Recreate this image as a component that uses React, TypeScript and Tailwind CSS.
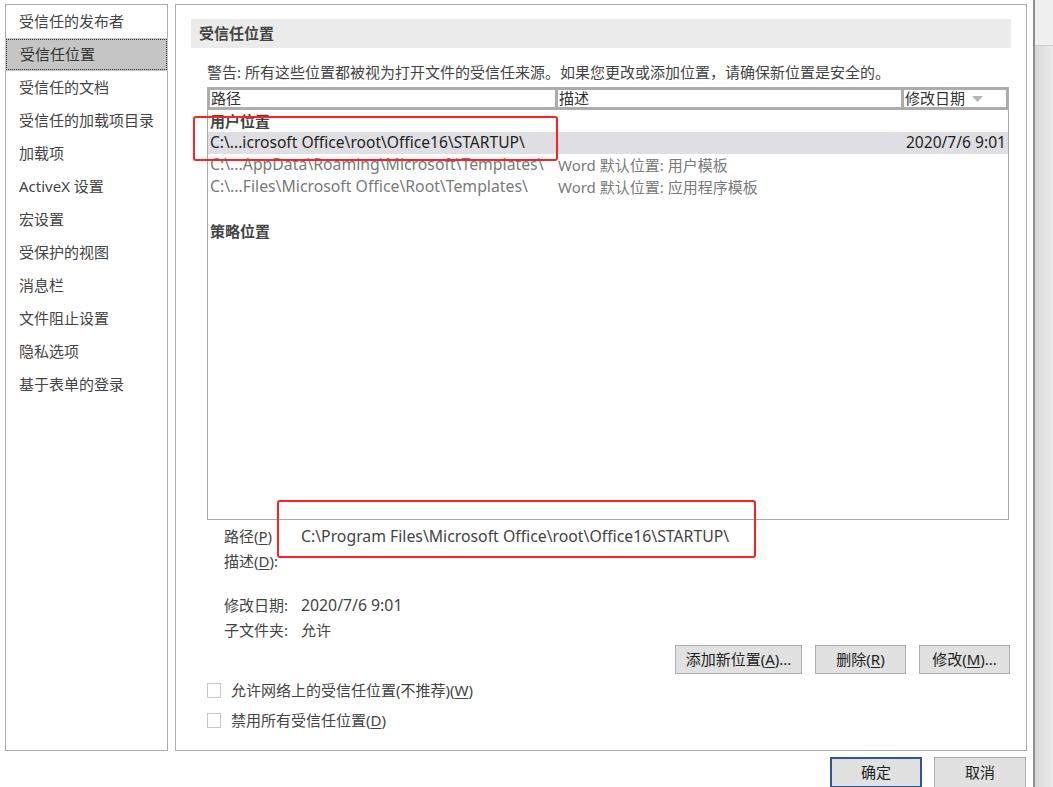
import React from "react";

const FONT = { fontFamily: '"Segoe UI", "Noto Sans", "Noto Sans CJK SC", sans-serif' };

const navItems = [
  "受信任的发布者",
  "受信任位置",
  "受信任的文档",
  "受信任的加载项目录",
  "加载项",
  "ActiveX 设置",
  "宏设置",
  "受保护的视图",
  "消息栏",
  "文件阻止设置",
  "隐私选项",
  "基于表单的登录",
];

function U({ children }: { children: React.ReactNode }) {
  return <span className="underline underline-offset-2">{children}</span>;
}

function Btn({ children, w }: { children: React.ReactNode; w: string }) {
  return (
    <div
      className={`${w} h-[29px] bg-[#e1e1e1] border border-[#adadad] flex items-center justify-center text-[15px] text-[#222]`}
    >
      {children}
    </div>
  );
}

export default function App() {
  return (
    <div className="relative w-[1053px] h-[787px] bg-white overflow-hidden flex" style={FONT}>
      {/* main column */}
      <div className="w-[1033px] h-full flex flex-col">
        <div className="flex pt-[4px] pl-[5px]">
          {/* left nav */}
          <div className="w-[163px] h-[747px] border border-[#ababab] flex flex-col">
            {navItems.map((t, i) =>
              i === 1 ? (
                <div key={t} className="h-[33px] bg-[#c5c5c5] p-[1px] -mx-px">
                  <div className="h-full border border-dotted border-[#333] flex items-center pl-[13px] text-[15px] text-[#333]">
                    {t}
                  </div>
                </div>
              ) : (
                <div key={t} className="h-[33px] flex items-center pl-[13px] text-[15px] text-[#444]">
                  {t}
                </div>
              )
            )}
          </div>

          {/* right panel */}
          <div className="ml-[7px] w-[852px] h-[747px] border border-[#ababab] flex flex-col">
            <div className="mt-[14px] mx-[15px] h-[29px] bg-[#ebebeb] flex items-center pl-[8px] text-[15px] font-bold text-[#444]">
              受信任位置
            </div>
            <div className="mt-[14px] ml-[31px] h-[20px] flex items-center text-[15px] text-[#444] whitespace-nowrap">
              警告: 所有这些位置都被视为打开文件的受信任来源。如果您更改或添加位置，请确保新位置是安全的。
            </div>

            {/* table */}
            <div className="mt-[5px] ml-[31px] w-[802px] flex flex-col">
              <div className="h-[23px] bg-[#acacac] p-[3px] flex gap-[3px]">
                <div className="w-[345px] bg-white flex items-center pl-[1px] text-[15px] text-[#333]">路径</div>
                <div className="w-[343px] bg-white flex items-center pl-[1px] text-[15px] text-[#333]">描述</div>
                <div className="w-[102px] bg-white flex items-center pl-[1px] text-[15px] text-[#333]">
                  修改日期
                  <svg width="11" height="6" viewBox="0 0 11 6" className="ml-[7px]">
                    <path d="M0 0 L11 0 L5.5 6 Z" fill="#b5b5b5" />
                  </svg>
                </div>
              </div>
              <div className="h-[410px] border-l border-r border-b border-[#a8a8a8] flex flex-col">
                <div className="h-[22px] flex items-center pl-[2px] text-[15px] font-bold text-[#444]">用户位置</div>
                <div className="h-[22px] bg-[#dfdfe3] flex items-center text-[15.6px] text-[#1e1e1e]">
                  <div className="w-[348px] pl-[2px] whitespace-nowrap">C:\...icrosoft Office\root\Office16\STARTUP\</div>
                  <div className="flex-1" />
                  <div className="pr-[2px]">2020/7/6 9:01</div>
                </div>
                <div className="h-[22px] flex items-center text-[#7a7a7a]">
                  <div className="w-[350px] pl-[2px] whitespace-nowrap text-[15.8px]">C:\...AppData\Roaming\Microsoft\Templates\</div>
                  <div className="whitespace-nowrap text-[15px]">Word 默认位置: 用户模板</div>
                </div>
                <div className="h-[22px] flex items-center text-[#7a7a7a]">
                  <div className="w-[350px] pl-[2px] whitespace-nowrap text-[15.8px]">C:\...Files\Microsoft Office\Root\Templates\</div>
                  <div className="whitespace-nowrap text-[15px]">Word 默认位置: 应用程序模板</div>
                </div>
                <div className="h-[22px]" />
                <div className="h-[22px] flex items-center pl-[2px] text-[15px] font-bold text-[#444]">策略位置</div>
              </div>
            </div>

            {/* details */}
            <div className="mt-[4px] ml-[48px] flex flex-col text-[15px] text-[#444]">
              <div className="h-[25px] flex items-center">
                <div className="w-[77px]">
                  路径(<U>P</U>)
                </div>
                <div className="whitespace-nowrap text-[15.8px]">C:\Program Files\Microsoft Office\root\Office16\STARTUP\</div>
              </div>
              <div className="h-[25px] flex items-center">
                <div className="w-[77px]">
                  描述(<U>D</U>):
                </div>
              </div>
              <div className="mt-[19px] h-[25px] flex items-center">
                <div className="w-[77px]">修改日期:</div>
                <div className="text-[15.8px]">2020/7/6 9:01</div>
              </div>
              <div className="h-[25px] flex items-center">
                <div className="w-[77px]">子文件夹:</div>
                <div>允许</div>
              </div>
            </div>

            <div className="mt-[2px] mr-[16px] flex justify-end gap-[13px]">
              <Btn w="w-[127px]">
                添加新位置(<U>A</U>)...
              </Btn>
              <Btn w="w-[91px]">
                删除(<U>R</U>)
              </Btn>
              <Btn w="w-[91px]">
                修改(<U>M</U>)...
              </Btn>
            </div>

            <div className="mt-[6px] ml-[31px] h-[21px] flex items-center text-[15px] text-[#444]">
              <div className="w-[14px] h-[15px] border border-[#c8c8c8] bg-white mr-[10px]" />
              <span>
                允许网络上的受信任位置(不推荐)(<U>W</U>)
              </span>
            </div>
            <div className="mt-[9px] ml-[31px] h-[21px] flex items-center text-[15px] text-[#444]">
              <div className="w-[14px] h-[15px] border border-[#c8c8c8] bg-white mr-[10px]" />
              <span>
                禁用所有受信任位置(<U>D</U>)
              </span>
            </div>
          </div>
        </div>

        {/* bottom buttons */}
        <div className="mt-[6px] pr-[7px] flex justify-end gap-[12px]">
          <div className="w-[92px] h-[31px] bg-[#e1e1e1] border-2 border-[#2b579a] flex items-center justify-center text-[15px] text-[#222]">
            确定
          </div>
          <div className="w-[92px] h-[31px] bg-[#e1e1e1] border border-[#adadad] flex items-center justify-center text-[15px] text-[#222]">
            取消
          </div>
        </div>
      </div>

      {/* scrollbar strip */}
      <div className="w-[20px] h-full border-l-2 border-[#8e8e8e] flex flex-col">
        <div className="h-[46px] bg-[#f0f0f0] border-b border-[#cdcdcd]" />
        <div className="flex-1 bg-gradient-to-r from-[#d9d9d9] to-[#ebebeb]" />
      </div>

      {/* red annotation boxes */}
      <div className="absolute left-[193px] top-[116px] w-[365px] h-[45px] border-2 border-[#ff2020] rounded-[3px] pointer-events-none" />
      <div className="absolute left-[277px] top-[500px] w-[479px] h-[58px] border-2 border-[#ff2020] rounded-[3px] pointer-events-none" />
    </div>
  );
}
